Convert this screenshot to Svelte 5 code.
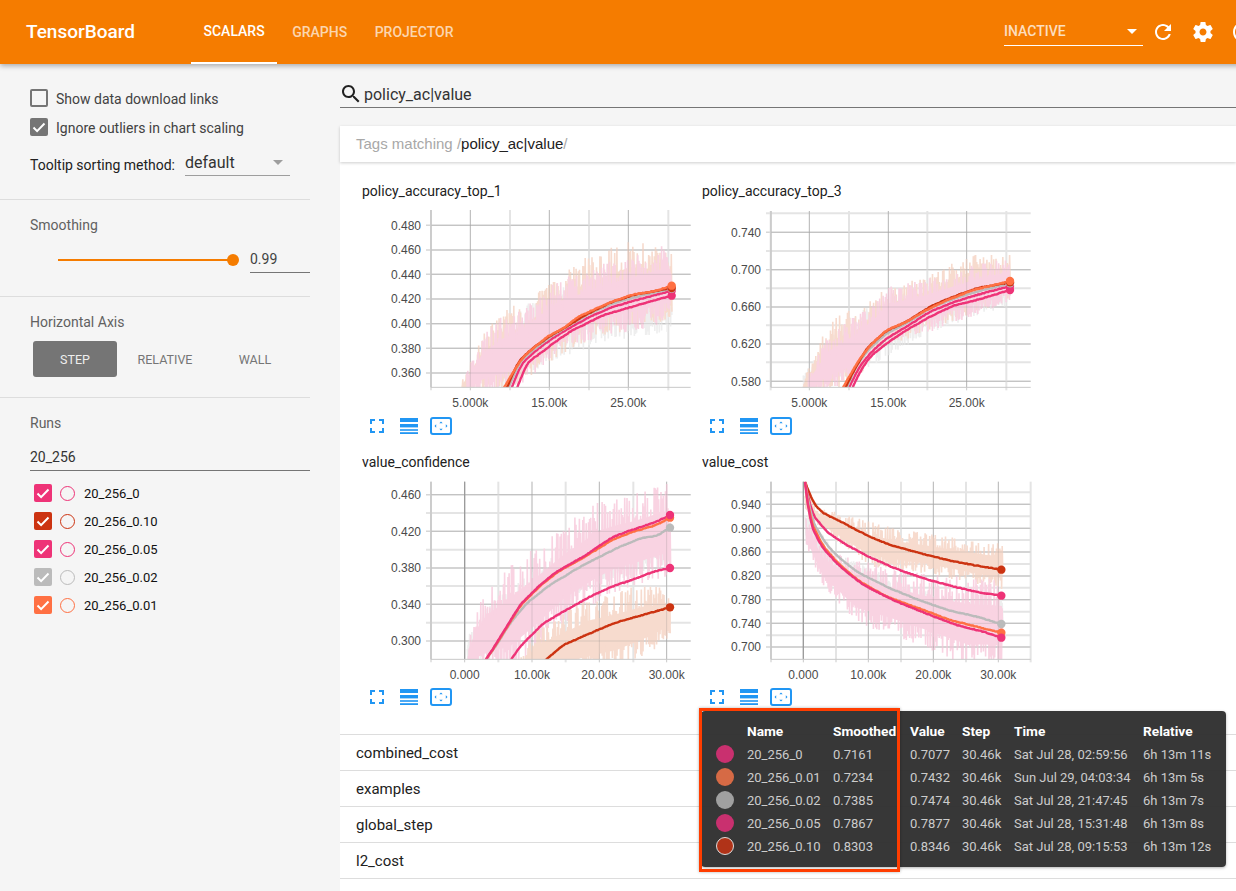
<script>
  const PINK = '#ee3377', RED = '#cc3311', GRAY = '#bbbbbb', ORANGE = '#ff7043';
  const BAND_PINK = '#f9d3e2', BAND_PEACH = '#f7dbce', BAND_GRAY = '#eeeeee';

  let seed = 12345;
  const rnd = () => {
    seed = (seed * 16807) % 2147483647;
    return seed / 2147483647;
  };

  function at(pts, x) {
    if (x <= pts[0][0]) return pts[0][1];
    for (let i = 1; i < pts.length; i++) {
      if (x <= pts[i][0]) {
        const t = (x - pts[i - 1][0]) / (pts[i][0] - pts[i - 1][0]);
        return pts[i - 1][1] + t * (pts[i][1] - pts[i - 1][1]);
      }
    }
    return pts[pts.length - 1][1];
  }

  function curve(pts, offY) {
    const a = pts[0][0], b = pts[pts.length - 1][0];
    const raw = [];
    for (let x = a; x <= b; x += 3) raw.push([x, at(pts, x)]);
    const out = raw.map(([x], i) => {
      const r = Math.min(4, i, raw.length - 1 - i);
      let s = 0;
      for (let k = i - r; k <= i + r; k++) s += raw[k][1];
      const j = r === 0 ? 0 : (rnd() - 0.5) * 2;
      return `${(x / 3).toFixed(1)},${((s / (2 * r + 1) + j - offY) / 3).toFixed(1)}`;
    });
    out.push(`${(b / 3).toFixed(1)},${((pts[pts.length - 1][1] - offY) / 3).toFixed(1)}`);
    return out.join(' ');
  }

  function band(top, low, offY) {
    const out = [];
    const a = top[0][0], b = top[top.length - 1][0];
    for (let x = a; x <= b; x += 3.4) {
      const hi = at(top, x), lo = at(low, x);
      const up = hi + (lo - hi) * Math.pow(rnd(), 1.3) * 0.5;
      const dn = lo - (lo - hi) * Math.pow(rnd(), 1.3) * 0.4;
      out.push(`${(x / 3).toFixed(1)},${((up - offY) / 3).toFixed(1)}`);
      out.push(`${((x + 1.7) / 3).toFixed(1)},${((dn - offY) / 3).toFixed(1)}`);
    }
    return out.join(' ');
  }

  function core(top, low, offY) {
    const a = top[0][0], b = top[top.length - 1][0];
    const up = [], dn = [];
    for (let x = a; x <= b; x += 6) {
      const hi = at(top, x), lo = at(low, x);
      up.push(`${(x / 3).toFixed(1)},${((hi + (lo - hi) * 0.3 - offY) / 3).toFixed(1)}`);
      dn.unshift(`${(x / 3).toFixed(1)},${((lo - (lo - hi) * 0.25 - offY) / 3).toFixed(1)}`);
    }
    return up.concat(dn).join(' ');
  }

  const defs = [
    {
      title: 'policy_accuracy_top_1', offY: 90, top: 105, bottom: 637,
      yMajor: [[151,'0.480'],[225,'0.460'],[298,'0.440'],[372,'0.420'],[446,'0.400'],[520,'0.380'],[594,'0.360']],
      yMinor: [],
      xMajor: [[361,'5.000k'],[598,'15.00k'],[835,'25.00k']],
      xMinor: [243,480,717,955],
      bands: [
        [BAND_GRAY, [[440,500],[470,405],[560,375],[700,300],[965,290]], [[440,660],[600,560],[760,500],[965,470]]],
        [BAND_PEACH, [[335,620],[360,565],[400,470],[460,410],[590,335],[690,255],[840,195],[965,225]], [[335,660],[480,650],[600,560],[760,490],[965,430]]],
        [BAND_PINK, [[350,590],[400,480],[460,420],[530,385],[590,340],[640,310],[700,290],[760,265],[840,240],[960,205],[965,270]], [[350,660],[480,650],[560,590],[620,530],[740,490],[860,465],[965,440]]]
      ],
      lines: [
        [PINK, [[497,650],[530,565],[570,535],[610,505],[660,470],[700,450],[760,420],[820,403],[880,385],[965,362]]],
        [PINK, [[480,650],[515,565],[560,525],[600,495],[660,458],[720,425],[790,395],[860,375],[965,347]]],
        [GRAY, [[470,650],[510,560],[550,525],[600,487],[660,450],[720,415],[790,385],[860,365],[965,341]]],
        [RED, [[465,650],[505,560],[545,522],[600,483],[650,455],[700,423],[780,383],[850,360],[965,339]]],
        [ORANGE, [[455,650],[490,590],[520,545],[555,515],[595,483],[640,460],[685,425],[740,400],[790,378],[850,358],[910,350],[965,332]]]
      ]
    },
    {
      title: 'policy_accuracy_top_3', offY: 90, top: 108, bottom: 637,
      yMajor: [[172,'0.740'],[284,'0.700'],[396,'0.660'],[507,'0.620'],[619,'0.580']],
      yMinor: [115,228,340,451,562],
      xMajor: [[358,'5.000k'],[595,'15.00k'],[830,'25.00k']],
      xMinor: [242,477,712,949],
      bands: [
        [BAND_GRAY, [[340,600],[420,480],[520,400],[700,330],[960,280]], [[340,660],[500,600],[700,480],[960,390]]],
        [BAND_PEACH, [[340,615],[360,570],[415,445],[450,415],[520,395],[600,330],[680,310],[760,280],[830,240],[930,235],[962,235]], [[340,660],[480,640],[560,530],[700,470],[960,375]]],
        [BAND_PINK, [[355,600],[415,480],[470,440],[560,380],[600,335],[680,320],[780,290],[850,270],[960,250]], [[355,660],[430,640],[490,620],[560,530],[640,490],[720,470],[830,430],[960,380]]]
      ],
      lines: [
        [PINK, [[482,650],[510,590],[540,545],[590,505],[650,465],[720,425],[790,392],[860,375],[960,345]]],
        [PINK, [[472,650],[505,580],[540,535],[590,490],[650,455],[720,410],[790,382],[860,360],[960,333]]],
        [GRAY, [[465,650],[500,570],[540,520],[590,475],[650,445],[720,400],[790,372],[860,350],[960,325]]],
        [RED, [[460,650],[490,590],[530,520],[590,467],[650,440],[720,395],[790,365],[860,340],[960,322]]],
        [ORANGE, [[452,650],[480,600],[510,550],[540,512],[590,465],[650,440],[700,410],[760,380],[850,345],[960,318]]]
      ]
    },
    {
      title: 'value_confidence', offY: 78, top: 95, bottom: 628, axisX: 344,
      yMajor: [[134,'0.460'],[244,'0.420'],[354,'0.380'],[463,'0.340'],[573,'0.300']],
      yMinor: [189,299,408,518],
      xMajor: [[344,'0.000'],[546,'10.00k'],[748,'20.00k'],[950,'30.00k']],
      xMinor: [243,445,647,850],
      bands: [
        [BAND_GRAY, [[352,560],[420,460],[600,320],[800,250],[960,230]], [[352,650],[500,560],[700,420],[960,340]]],
        [BAND_PINK, [[355,570],[380,480],[410,420],[500,330],[570,280],[650,220],[750,150],[850,130],[950,100],[962,180]], [[355,670],[480,670],[550,610],[640,520],[720,470],[800,425],[962,375]]],
        [BAND_PEACH, [[500,640],[560,540],[640,490],[720,440],[800,420],[880,405],[962,415]], [[500,700],[700,680],[800,660],[900,610],[962,560]]]
      ],
      lines: [
        [RED, [[575,640],[640,585],[720,550],[790,520],[860,500],[960,472]]],
        [PINK, [[475,640],[510,590],[580,520],[640,485],[720,440],[790,408],[860,385],[910,365],[960,354]]],
        [GRAY, [[400,640],[440,585],[480,520],[530,460],[600,405],[700,345],[800,295],[870,265],[920,258],[960,233]]],
        [ORANGE, [[400,640],[430,597],[470,533],[510,468],[570,408],[620,368],[700,323],[790,268],[850,245],[920,225],[960,203]]],
        [PINK, [[400,640],[430,595],[470,530],[510,465],[570,405],[620,365],[700,320],[790,260],[850,238],[920,215],[960,195]]]
      ]
    },
    {
      title: 'value_cost', offY: 78, top: 95, bottom: 628, axisX: 340,
      yMajor: [[163,'0.940'],[235,'0.900'],[306,'0.860'],[378,'0.820'],[449,'0.780'],[520,'0.740'],[591,'0.700']],
      yMinor: [127,199,270,342,413,485,556],
      xMajor: [[340,'0.000'],[535,'10.00k'],[730,'20.00k'],[925,'30.00k']],
      xMinor: [243,438,633,828,1022],
      bands: [
        [BAND_GRAY, [[345,180],[440,310],[640,400],[800,450],[938,440]], [[345,280],[480,440],[700,520],[938,550]]],
        [BAND_PEACH, [[345,100],[380,170],[450,190],[540,215],[640,240],[780,260],[938,280]], [[345,200],[420,260],[540,350],[700,370],[938,420]]],
        [BAND_PINK, [[348,200],[400,290],[500,330],[700,370],[938,390]], [[348,290],[400,410],[500,520],[630,565],[720,600],[830,650],[938,650]]]
      ],
      lines: [
        [RED, [[345,95],[370,160],[400,190],[440,208],[480,230],[540,260],[600,285],[700,312],[780,332],[860,347],[934,359]]],
        [PINK, [[345,95],[365,190],[410,245],[470,285],[540,322],[620,357],[700,385],[800,412],[870,428],[934,437]]],
        [GRAY, [[345,95],[365,210],[410,285],[450,325],[500,365],[600,415],[700,455],[780,482],[860,500],[934,522]]],
        [ORANGE, [[345,95],[360,210],[400,290],[450,345],[510,395],[590,440],[700,480],[780,510],[860,530],[934,548]]],
        [PINK, [[345,95],[360,220],[395,290],[450,350],[520,405],[620,455],[720,495],[800,525],[880,545],[934,563]]]
      ]
    }
  ];

  const charts = defs.map((d, i) => ({
    ...d,
    id: 'plot' + i,
    bandLines: d.bands.map(([color, t, l]) => ({
      color,
      points: band(t, l, d.offY),
      core: core(t, l, d.offY)
    })),
    series: d.lines.map(([color, p]) => ({
      color,
      points: curve(p, d.offY),
      cx: p[p.length - 1][0] / 3,
      cy: (p[p.length - 1][1] - d.offY) / 3
    }))
  }));

  const runs = [
    { name: '20_256_0', color: PINK },
    { name: '20_256_0.10', color: RED },
    { name: '20_256_0.05', color: PINK },
    { name: '20_256_0.02', color: GRAY },
    { name: '20_256_0.01', color: ORANGE }
  ];

  const rows = [
    ['#c9306f', '20_256_0', '0.7161', '0.7077', 'Sat Jul 28, 02:59:56', '6h 13m 11s'],
    ['#d66a45', '20_256_0.01', '0.7234', '0.7432', 'Sun Jul 29, 04:03:34', '6h 13m 5s'],
    ['#a0a0a0', '20_256_0.02', '0.7385', '0.7474', 'Sat Jul 28, 21:47:45', '6h 13m 7s'],
    ['#c9306f', '20_256_0.05', '0.7867', '0.7877', 'Sat Jul 28, 15:31:48', '6h 13m 8s'],
    ['#b03318', '20_256_0.10', '0.8303', '0.8346', 'Sat Jul 28, 09:15:53', '6h 13m 12s']
  ];

  const cats = ['combined_cost', 'examples', 'global_step', 'l2_cost'];
</script>

<div class="page">
  <header class="topbar">
    <div class="brand">TensorBoard</div>
    <nav class="tabs">
      <span class="tab active">SCALARS</span>
      <span class="tab">GRAPHS</span>
      <span class="tab">PROJECTOR</span>
    </nav>
    <div class="inactive">
      <span>INACTIVE</span>
      <i class="caret white"></i>
    </div>
    <svg class="hicon first" viewBox="0 0 24 24"><path d="M17.65 6.35C16.2 4.9 14.21 4 12 4c-4.42 0-7.99 3.58-7.99 8s3.57 8 7.99 8c3.73 0 6.84-2.55 7.73-6h-2.08c-.82 2.33-3.04 4-5.65 4-3.31 0-6-2.69-6-6s2.69-6 6-6c1.66 0 3.14.69 4.22 1.78L13 11h7V4l-2.35 2.35z"/></svg>
    <svg class="hicon" viewBox="0 0 24 24"><path d="M19.43 12.98c.04-.32.07-.64.07-.98s-.03-.66-.07-.98l2.11-1.65c.19-.15.24-.42.12-.64l-2-3.46c-.12-.22-.39-.3-.61-.22l-2.49 1c-.52-.4-1.08-.73-1.69-.98l-.38-2.65C14.46 2.18 14.25 2 14 2h-4c-.25 0-.46.18-.49.42l-.38 2.65c-.61.25-1.17.59-1.69.98l-2.49-1c-.23-.09-.49 0-.61.22l-2 3.46c-.13.22-.07.49.12.64l2.11 1.65c-.04.32-.07.65-.07.98s.03.66.07.98l-2.11 1.65c-.19.15-.24.42-.12.64l2 3.46c.12.22.39.3.61.22l2.49-1c.52.4 1.08.73 1.69.98l.38 2.65c.03.24.24.42.49.42h4c.25 0 .46-.18.49-.42l.38-2.65c.61-.25 1.17-.59 1.69-.98l2.49 1c.23.09.49 0 .61-.22l2-3.46c.12-.22.07-.49-.12-.64l-2.11-1.65zM12 15.5c-1.93 0-3.5-1.57-3.5-3.5s1.57-3.5 3.5-3.5 3.5 1.57 3.5 3.5-1.57 3.5-3.5 3.5z"/></svg>
    <svg class="hicon" viewBox="0 0 24 24"><path d="M11 18h2v-2h-2v2zm1-16C6.48 2 2 6.48 2 12s4.48 10 10 10 10-4.48 10-10S17.52 2 12 2zm0 18c-4.41 0-8-3.59-8-8s3.59-8 8-8 8 3.59 8 8-3.59 8-8 8zm0-14c-2.21 0-4 1.79-4 4h2c0-1.1.9-2 2-2s2 .9 2 2c0 2-3 1.75-3 5h2c0-2.25 3-2.5 3-5 0-2.21-1.79-4-4-4z"/></svg>
  </header>

  <div class="body">
    <aside class="side">
      <section class="sec first">
        <div class="check-row">
          <span class="box"></span>
          <span class="check-label">Show data download links</span>
        </div>
        <div class="check-row">
          <span class="box on">
            <svg viewBox="0 0 18 18"><path d="M3.5 9.5l3.6 3.6 7.4-7.6" /></svg>
          </span>
          <span class="check-label">Ignore outliers in chart scaling</span>
        </div>
        <div class="sort-row">
          <span>Tooltip sorting method:</span>
          <div class="dropdown"><span>default</span><i class="caret"></i></div>
        </div>
      </section>

      <section class="sec smooth">
        <div class="sec-title">Smoothing</div>
        <div class="slider-row">
          <div class="track"><i class="thumb"></i></div>
          <div class="num">0.99</div>
        </div>
      </section>

      <section class="sec axis">
        <div class="sec-title">Horizontal Axis</div>
        <div class="axis-btns">
          <span class="abtn sel">STEP</span>
          <span class="abtn">RELATIVE</span>
          <span class="abtn">WALL</span>
        </div>
      </section>

      <section class="sec runs">
        <div class="sec-title">Runs</div>
        <div class="run-filter">20_256</div>
        <div class="run-list">
          {#each runs as r}
            <div class="run">
              <span class="run-box" style:background={r.color}>
                <svg viewBox="0 0 18 18"><path d="M3.5 9.5l3.6 3.6 7.4-7.6" /></svg>
              </span>
              <span class="ring" style:border-color={r.color}></span>
              <span class="run-name">{r.name}</span>
            </div>
          {/each}
        </div>
      </section>
    </aside>

    <main class="main">
      <div class="search">
        <svg class="search-ic" viewBox="0 0 24 24"><path d="M15.5 14h-.79l-.28-.27C15.41 12.59 16 11.11 16 9.5 16 5.91 13.09 3 9.5 3S3 5.91 3 9.5 5.91 16 9.5 16c1.61 0 3.09-.59 4.23-1.57l.27.28v.79l5 4.99L20.49 19l-4.99-5zm-6 0C7.01 14 5 11.99 5 9.5S7.01 5 9.5 5 14 7.01 14 9.5 11.99 14 9.5 14z"/></svg>
        <span class="search-text">policy_ac|value</span>
      </div>

      <div class="tags-head">Tags matching /<b>policy_ac|value</b>/</div>

      <div class="chart-card">
        {#each charts as c}
          <div class="chart">
            <div class="chart-title">{c.title}</div>
            <svg class="plot" viewBox="0 0 345 205">
              <defs>
                <clipPath id={c.id}>
                  <rect x="81" y={(c.top - c.offY) / 3} width="260" height={(c.bottom - c.top) / 3} />
                </clipPath>
              </defs>
              {#each c.yMinor as y}
                <line class="minor" x1="76" x2="340.7" y1={(y - c.offY) / 3} y2={(y - c.offY) / 3} />
              {/each}
              {#each c.yMajor as [y]}
                <line class="major-h" x1="76" x2="340.7" y1={(y - c.offY) / 3} y2={(y - c.offY) / 3} />
              {/each}
              {#each c.xMinor as x}
                <line class="minor" x1={x / 3} x2={x / 3} y1={(c.top - c.offY) / 3} y2={(c.bottom - c.offY) / 3 + 3} />
              {/each}
              {#each c.xMajor as [x]}
                <line class="major" x1={x / 3} x2={x / 3} y1={(c.top - c.offY) / 3} y2={(c.bottom - c.offY) / 3 + 3} />
              {/each}
              <g clip-path="url(#{c.id})">
                {#each c.bandLines as b}
                  <polygon points={b.core} fill={b.color} />
                  <polyline points={b.points} fill="none" stroke={b.color} stroke-width="1.6" />
                {/each}
              </g>
              {#each c.yMajor as [y]}
                <line class="over" x1="81" x2="340.7" y1={(y - c.offY) / 3} y2={(y - c.offY) / 3} />
              {/each}
              {#each c.xMajor as [x]}
                <line class="over" x1={x / 3} x2={x / 3} y1={(c.top - c.offY) / 3} y2={(c.bottom - c.offY) / 3} />
              {/each}
              <g clip-path="url(#{c.id})">
                {#each c.series as s}
                  <polyline points={s.points} fill="none" stroke={s.color} stroke-width="2.4" stroke-linejoin="round" />
                {/each}
              </g>
              {#if c.axisX}
                <line class="zero" x1={c.axisX / 3} x2={c.axisX / 3} y1={(c.top - c.offY) / 3} y2={(c.bottom - c.offY) / 3} />
              {/if}
              <line class="axis-l" x1="81" x2="81" y1={(c.top - c.offY) / 3} y2={(c.bottom - c.offY) / 3} />
              <line class="axis-b" x1="81" x2="340.7" y1={(c.bottom - c.offY) / 3} y2={(c.bottom - c.offY) / 3} />
              {#each c.series as s}
                <circle cx={s.cx} cy={s.cy} r="4.2" fill={s.color} />
              {/each}
              {#each c.yMajor as [y, t]}
                <text class="tick" x="71" y={(y - c.offY) / 3 + 4.2} text-anchor="end">{t}</text>
              {/each}
              {#each c.xMajor as [x, t]}
                <text class="tick" x={x / 3} y={(c.bottom - c.offY) / 3 + 20} text-anchor="middle">{t}</text>
              {/each}
            </svg>
            <div class="chart-icons">
              <svg class="ic-fit" viewBox="0 0 14 14"><path d="M1 5V1h4M9 1h4v4M13 9v4H9M5 13H1V9" /></svg>
              <svg class="ic-list" viewBox="0 0 18 16">
                <rect y="0" width="18" height="4" /><rect y="6" width="18" height="3.4" /><rect y="11.2" width="18" height="1.6" /><rect y="14.2" width="18" height="1.8" />
              </svg>
              <svg class="ic-domain" viewBox="0 0 22 18">
                <rect class="frame" x="1" y="1" width="20" height="16" rx="2" />
                <path d="M11 4.5l-1.7 1.7h3.4zM11 13.5l-1.7-1.7h3.4zM4.5 9l1.7-1.7v3.4zM17.5 9l-1.7-1.7v3.4z" />
              </svg>
            </div>
          </div>
        {/each}
      </div>

      {#each cats as name}
        <div class="cat">{name}</div>
      {/each}
      <div class="cat"></div>
    </main>
  </div>

  <div class="tooltip">
    <table>
      <colgroup>
        <col class="c-dot" /><col class="c-name" /><col class="c-smooth" /><col class="c-val" /><col class="c-step" /><col class="c-time" /><col class="c-rel" />
      </colgroup>
      <thead>
        <tr><th></th><th>Name</th><th>Smoothed</th><th>Value</th><th>Step</th><th>Time</th><th>Relative</th></tr>
      </thead>
      <tbody>
        {#each rows as r, i}
          <tr>
            <td><span class="dot" class:ringed={i === 4} style:background={r[0]}></span></td>
            <td>{r[1]}</td><td>{r[2]}</td><td>{r[3]}</td><td>30.46k</td><td>{r[4]}</td><td>{r[5]}</td>
          </tr>
        {/each}
      </tbody>
    </table>
  </div>
  <div class="highlight"></div>
</div>

<style>
  :global(body) {
    margin: 0;
    background: #f5f5f5;
  }
  .page {
    position: relative;
    width: 1236px;
    height: 891px;
    overflow: hidden;
    background: #f5f5f5;
    font-family: Roboto, "Liberation Sans", sans-serif;
    font-size: 14px;
    color: #212121;
  }
  .topbar {
    position: relative;
    z-index: 2;
    display: flex;
    align-items: center;
    width: 1280px;
    height: 64px;
    padding-left: 26px;
    box-sizing: border-box;
    background: #f57c00;
    color: #fff;
    box-shadow: 0 2px 5px rgba(0, 0, 0, 0.3);
  }
  .brand {
    width: 165px;
    padding-bottom: 1px;
    font-size: 19px;
    font-weight: 500;
  }
  .tabs {
    display: flex;
    align-self: stretch;
    width: 813px;
  }
  .tab {
    display: flex;
    align-items: center;
    padding: 0 12.5px;
    margin-right: 2.5px;
    box-sizing: border-box;
    font-weight: 500;
    color: rgba(255, 255, 255, 0.7);
  }
  .tab.active {
    color: #fff;
    border-bottom: 2px solid #fff;
  }
  .inactive {
    position: relative;
    display: flex;
    align-items: center;
    justify-content: space-between;
    width: 139px;
    height: 28px;
    margin-top: -1px;
    padding-right: 6px;
    box-sizing: border-box;
    border-bottom: 1px solid #fff;
    font-weight: 500;
    color: rgba(255, 255, 255, 0.75);
  }
  .caret {
    width: 0;
    height: 0;
    border-left: 5px solid transparent;
    border-right: 5px solid transparent;
    border-top: 5px solid #9e9e9e;
  }
  .caret.white {
    border-top-color: #fff;
  }
  .hicon {
    width: 24px;
    height: 24px;
    margin-right: 16px;
    fill: #fff;
    flex-shrink: 0;
  }
  .hicon.first {
    margin-left: 8px;
  }

  .body {
    display: flex;
  }
  .side {
    width: 310px;
    margin-right: 30px;
    flex-shrink: 0;
  }
  .sec {
    padding: 15px 0 0 30px;
    box-sizing: border-box;
    border-bottom: 1px solid #ddd;
    color: #424242;
  }
  .sec.first {
    height: 136px;
    padding-top: 25px;
  }
  .check-row {
    display: flex;
    align-items: center;
    height: 18px;
    margin-bottom: 11px;
    gap: 8px;
  }
  .check-label {
    padding-top: 2px;
  }
  .box {
    width: 18px;
    height: 18px;
    box-sizing: border-box;
    border: 2px solid #757575;
    border-radius: 2px;
  }
  .box.on {
    background: #757575;
    border: 0;
  }
  .box svg,
  .run-box svg {
    display: block;
    width: 18px;
    height: 18px;
    fill: none;
    stroke: #fff;
    stroke-width: 2;
  }
  .sort-row {
    display: flex;
    align-items: flex-end;
    height: 29px;
    color: #212121;
  }
  .sort-row > span {
    padding-bottom: 3px;
  }
  .dropdown {
    display: flex;
    align-items: center;
    justify-content: space-between;
    width: 105px;
    height: 29px;
    margin-left: 10px;
    padding: 3px 7px 0 0;
    box-sizing: border-box;
    border-bottom: 1px solid #9e9e9e;
    font-size: 16px;
    color: #333;
  }
  .sec-title {
    height: 20px;
    line-height: 20px;
    color: #616161;
  }
  .sec.smooth {
    height: 97px;
  }
  .slider-row {
    display: flex;
    align-items: center;
    height: 28px;
    margin-top: 10px;
  }
  .track {
    position: relative;
    width: 175px;
    height: 2px;
    margin: 2px 17px 0 28px;
    background: #f57c00;
  }
  .thumb {
    position: absolute;
    right: -6px;
    top: -5px;
    width: 12px;
    height: 12px;
    border-radius: 50%;
    background: #f57c00;
  }
  .num {
    width: 60px;
    height: 27px;
    line-height: 29px;
    border-bottom: 1px solid #757575;
    color: #424242;
  }
  .sec.axis {
    height: 101px;
  }
  .axis-btns {
    display: flex;
    gap: 6px;
    margin: 9px 0 0 3px;
  }
  .abtn {
    display: flex;
    align-items: center;
    justify-content: center;
    width: 84px;
    height: 36px;
    border-radius: 3px;
    font-size: 12.5px;
    color: #757575;
  }
  .abtn.sel {
    background: #757575;
    color: #eee;
  }
  .sec.runs {
    border-bottom: 0;
  }
  .run-filter {
    height: 29px;
    line-height: 32px;
    margin-top: 8px;
    border-bottom: 1px solid #757575;
    color: #333;
  }
  .run-list {
    margin-top: 8px;
  }
  .run {
    display: flex;
    align-items: center;
    height: 28px;
  }
  .run-box {
    width: 18px;
    height: 18px;
    margin-left: 4px;
    border-radius: 2px;
  }
  .ring {
    width: 15px;
    height: 15px;
    margin-left: 8px;
    box-sizing: border-box;
    border: 1.7px solid;
    border-radius: 50%;
  }
  .run-name {
    margin-left: 9px;
    font-size: 13px;
    color: #111;
  }

  .main {
    flex: 1;
    min-width: 0;
  }
  .search {
    display: flex;
    align-items: center;
    gap: 1px;
    height: 44px;
    padding-top: 16px;
    margin-bottom: 18px;
    box-sizing: border-box;
    font-size: 16px;
    color: #333;
    border-bottom: 1px solid #757575;
  }
  .search-text {
    padding-top: 2px;
  }
  .search-ic {
    width: 24px;
    height: 24px;
    margin-left: -1px;
    fill: #212121;
  }
  .tags-head {
    position: relative;
    height: 36px;
    line-height: 36px;
    padding-left: 16px;
    box-sizing: border-box;
    background: #fff;
    font-family: "Liberation Sans", Arial, sans-serif;
    font-size: 15px;
    color: #a8a8a8;
    box-shadow: 0 1px 3px rgba(0, 0, 0, 0.2);
  }
  .tags-head b {
    font-weight: 400;
    color: #212121;
  }
  .chart-card {
    display: grid;
    grid-template-columns: 340px 340px;
    grid-auto-rows: 271px;
    height: 573px;
    padding: 19px 0 0 10px;
    box-sizing: border-box;
    background: #fff;
    border-bottom: 1px solid #ddd;
  }
  .chart {
    min-width: 0;
  }
  .chart-title {
    height: 20px;
    line-height: 20px;
    padding-left: 12px;
    margin-bottom: 4px;
    font-size: 14px;
    color: #212121;
  }
  .plot {
    display: block;
    width: 345px;
    height: 205px;
  }
  .minor {
    stroke: #e4e4e4;
    stroke-width: 2;
  }
  .major-h {
    stroke: #d6d6d6;
    stroke-width: 1.5;
  }
  .major {
    stroke: #c9c9c9;
    stroke-width: 1;
  }
  .over {
    stroke: rgba(120, 120, 120, 0.22);
    stroke-width: 1;
  }
  .zero {
    stroke: #999;
    stroke-width: 1.2;
  }
  .axis-l {
    stroke: #b5b5b5;
    stroke-width: 1;
  }
  .axis-b {
    stroke: #c8c8c8;
    stroke-width: 1;
  }
  .tick {
    font-family: "Liberation Sans", Arial, sans-serif;
    font-size: 12px;
    fill: #4a4a4a;
  }
  .chart-icons {
    display: flex;
    align-items: center;
    gap: 16px;
    height: 22px;
    margin-top: 5px;
    padding-left: 20px;
  }
  .ic-fit {
    width: 14px;
    height: 14px;
    fill: none;
    stroke: #2196f3;
    stroke-width: 2;
  }
  .ic-list {
    width: 18px;
    height: 16px;
    fill: #2196f3;
  }
  .ic-domain {
    width: 22px;
    height: 18px;
    margin-left: -4px;
    fill: #2196f3;
  }
  .frame {
    fill: none;
    stroke: #2196f3;
    stroke-width: 2;
  }
  .cat {
    height: 36px;
    line-height: 37px;
    padding-left: 16px;
    box-sizing: border-box;
    background: #fff;
    border-bottom: 1px solid #ddd;
    font-size: 15px;
    color: #212121;
  }

  .tooltip {
    position: absolute;
    z-index: 3;
    left: 701px;
    top: 711px;
    width: 525px;
    height: 156px;
    padding-top: 9px;
    box-sizing: border-box;
    border-radius: 4px;
    background: rgba(44, 44, 44, 0.95);
    box-shadow: 0 1px 3px rgba(0, 0, 0, 0.3);
    font-size: 13px;
    color: #ccc;
  }
  table {
    table-layout: fixed;
    width: 525px;
    border-collapse: collapse;
  }
  th {
    height: 23px;
    padding: 0 0 2px;
    box-sizing: border-box;
    text-align: left;
    font-weight: 700;
    color: #fff;
    font-size: 13.7px;
  }
  td {
    height: 23px;
    padding: 0;
    white-space: nowrap;
  }
  .c-dot { width: 46px; }
  .c-name { width: 86px; }
  .c-smooth { width: 77px; }
  .c-val { width: 52px; }
  .c-step { width: 52px; }
  .c-time { width: 129px; }
  .c-rel { width: 83px; }
  .dot {
    display: block;
    width: 18px;
    height: 18px;
    margin: -1px 0 0 15px;
    box-sizing: border-box;
    border-radius: 50%;
  }
  .dot.ringed {
    border: 1.5px solid #ddd;
  }
  .highlight {
    position: absolute;
    z-index: 4;
    left: 699px;
    top: 708px;
    width: 201px;
    height: 164px;
    box-sizing: border-box;
    border: 3px solid #ff3d00;
    box-shadow: 0 0 3px rgba(0, 0, 0, 0.3);
  }
</style>
